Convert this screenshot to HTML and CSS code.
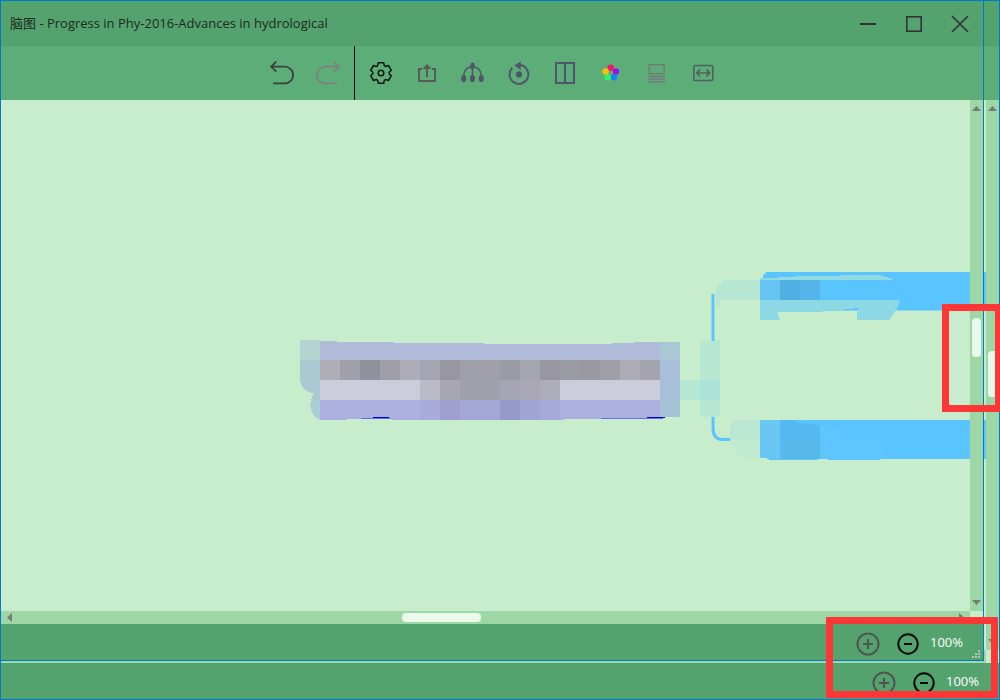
FILE: index.html
```html
<!DOCTYPE html>
<html lang="zh">
<head>
    <meta charset="UTF-8">
    <meta name="viewport" content="width=device-width, initial-scale=1.0">
    <title>脑图 - Progress in Phy-2016-Advances in hydrological</title>
    <link rel="stylesheet" href="styles.css">
</head>
<body>

    <!-- back window -->
    <div class="window back">
        <div class="titlebar"></div>
        <div class="toolbar"></div>
        <div class="content">
            <div class="canvas">
                <svg class="map">
                    <g transform="translate(-1 -100)" fill="#5ac4ff">
                        <rect x="764" y="272" width="1200" height="38"/>
                        <rect x="764" y="420" width="1200" height="39"/>
                    </g>
                </svg>
            </div>
            <div class="scroll vertical">
                <span class="arrow up"></span>
                <div class="track"><div class="thumb"></div></div>
                <span class="arrow down"></span>
            </div>
            <div class="scroll horizontal"></div>
        </div>
        <div class="statusbar">
            <button class="zoom-btn" aria-label="Zoom in">
                <svg width="24" height="24" fill="none" stroke="#505552" stroke-width="2"><circle cx="12" cy="12" r="10.5"/><path d="M12 7v10M7 12h10"/></svg>
            </button>
            <button class="zoom-btn" aria-label="Zoom out">
                <svg width="24" height="24" fill="none" stroke="#050a06" stroke-width="2"><circle cx="12" cy="12" r="9.7"/><path d="M8 12h8"/></svg>
            </button>
            <span class="percent">100%</span>
        </div>
    </div>

    <!-- front window -->
    <div class="window front">
        <div class="titlebar">
            <span class="title">脑图 - Progress in Phy-2016-Advances in hydrological</span>
            <button class="win-btn" aria-label="Minimize">
                <svg width="24" height="24" stroke="#333" stroke-width="2"><path d="M4 12h16"/></svg>
            </button>
            <button class="win-btn" aria-label="Maximize">
                <svg width="24" height="24" fill="none" stroke="#333" stroke-width="1.6"><rect x="4.8" y="4.8" width="14.4" height="14.4"/></svg>
            </button>
            <button class="win-btn" aria-label="Close">
                <svg width="24" height="24" stroke="#333" stroke-width="1.7"><path d="M4 4l16 16M20 4L4 20"/></svg>
            </button>
        </div>

        <div class="toolbar">
            <button class="tool" aria-label="Undo">
                <svg width="24" height="24" fill="none" stroke="#38423b" stroke-width="1.8"><path d="M6.3.6L1.1 5.6l5.2 5M1.1 5.6H14.8a8.3 8.3 0 0 1 0 16.7H3"/></svg>
            </button>
            <button class="tool" aria-label="Redo" disabled>
                <svg width="24" height="24" fill="none" stroke="#808080" stroke-width="1.8"><path d="M17.7.6l5.2 5-5.2 5M22.900 5.600H9.200a8.300 8.300 0 0 0 0 16.700h12"/></svg>
            </button>
            <span class="divider"></span>
            <button class="tool" aria-label="Settings">
                <svg width="24" height="24" fill="none" stroke="#0c1a10" stroke-width="1.500" stroke-linejoin="round">
                    <path d="M9.300 1.700h5.400l.6 3 1.400.8 2.800-1 2.800 4.800-2.100 2v1.400l2.100 2-2.800 4.800-2.800-1-1.400.8-.6 3H9.300l-.6-3-1.400-.8-2.800 1-2.800-4.800 2.100-2v-1.400l-2.100-2 2.800-4.800 2.800 1 1.400-.8z"/>
                    <circle cx="12" cy="12" r="2.800"/>
                </svg>
            </button>
            <button class="tool" aria-label="Export">
                <svg width="24" height="24" fill="none" stroke="#565b58" stroke-width="2"><path d="M7 8H4v12h16V8h-3M12 16V5"/><path d="M7.500 8L12 3l4.500 5z" fill="#565b58" stroke="none"/></svg>
            </button>
            <button class="tool" aria-label="Structure">
                <svg width="24" height="24" fill="#50556a">
                    <path d="M2.500 16C2.700 9.500 6 6 11.500 5.500 17 6 20.300 9.500 20.500 16M11.500 5v12" fill="none" stroke="#50556a" stroke-width="1.500"/>
                    <ellipse cx="11.500" cy="5" rx="2.200" ry="3.400"/>
                    <ellipse cx="2.700" cy="17.400" rx="2.500" ry="3.600"/>
                    <ellipse cx="11.500" cy="17.400" rx="2.500" ry="3.600"/>
                    <ellipse cx="20.300" cy="17.400" rx="2.500" ry="3.600"/>
                </svg>
            </button>
            <button class="tool" aria-label="Rotate">
                <svg width="24" height="24" fill="#50556a"><path d="M5.300 6.800A9.400 9.400 0 1 0 13 4.100" fill="none" stroke="#50556a" stroke-width="2"/><circle cx="12" cy="13.400" r="3.100"/><path d="M7.500 4.500L13.700.5v8.500z"/></svg>
            </button>
            <button class="tool" aria-label="Columns">
                <svg width="24" height="24" fill="none" stroke="#50556a" stroke-width="2"><rect x="3" y="2" width="18" height="20"/><path d="M12 2v20"/></svg>
            </button>
            <button class="tool" aria-label="Colors">
                <svg width="24" height="24">
                    <circle cx="11.700" cy="6.700" r="3.200" fill="#f8136c"/>
                    <circle cx="17" cy="10.500" r="3.200" fill="#9a10f0"/>
                    <circle cx="15" cy="16.300" r="3.200" fill="#1484fa"/>
                    <circle cx="8.700" cy="16.300" r="3.200" fill="#2cf664"/>
                    <circle cx="6.700" cy="10.500" r="3.200" fill="#fbbf05"/>
                </svg>
            </button>
            <button class="tool" aria-label="Outline" disabled>
                <svg width="24" height="24" fill="none" stroke="#747b76" stroke-width="1.500"><rect x="4.200" y="3.700" width="15" height="9"/><path d="M3.500 15.500h16.500M3.500 18h16.500M3.500 20.800h16.500"/></svg>
            </button>
            <button class="tool" aria-label="Fit width">
                <svg width="24" height="24" fill="none" stroke="#50605a" stroke-width="1.600"><rect x="2.800" y="4.500" width="19" height="15" rx="1.500"/><path d="M6 12h12.500M9 8.500L5.800 12 9 15.500M15.500 8.500l3.200 3.500-3.200 3.500"/></svg>
            </button>
        </div>

        <div class="content">
            <div class="canvas">
                <svg class="map" shape-rendering="crispEdges">
                    <g transform="translate(-1 -100)">
                        <!-- connector -->
                        <path d="M713 294V428Q713 439.500 723 439.500H731" fill="none" stroke="#5ac4ff" stroke-width="3" shape-rendering="auto"/>
                        <path d="M714 300Q715 286 724 280H760V300H720V308Z" fill="#b5e7d3"/>
                        <rect x="680" y="380" width="20" height="20" fill="#b5e7d3"/>
                        <path d="M700 341H716V340H720V416H715V417H700Z" fill="#b5e7d3"/>
                        <rect x="700" y="380" width="20" height="20" fill="#abe3d9"/>

                        <!-- root node -->
                        <rect x="300" y="340" width="20" height="20" fill="#b2d5d2"/>
                        <path d="M300 360H320V400H311L314 393Q306 393 302 386L300 381Z" fill="#a9c9d3"/>
                        <path d="M311 400H320V420Q308 414 311 400Z" fill="#aad0d3"/>
                        <path d="M320 341H337V342H394V343H484V344H612V343H634V342H660V360H320Z" fill="#b0bbda"/>
                        <rect x="660" y="342" width="20" height="18" fill="#aac8d4"/>
                        <rect x="660" y="360" width="20" height="40" fill="#a9bfd9"/>
                        <rect x="660" y="400" width="20" height="17" fill="#a6c2d6"/>

                        <rect x="320" y="360" width="20" height="20" fill="#aeadb8"/>
                        <rect x="340" y="360" width="20" height="20" fill="#a19fa9"/>
                        <rect x="360" y="360" width="20" height="20" fill="#8f929c"/>
                        <rect x="380" y="360" width="20" height="20" fill="#a09fa9"/>
                        <rect x="400" y="360" width="20" height="20" fill="#adacb7"/>
                        <rect x="420" y="360" width="20" height="20" fill="#a4a5b2"/>
                        <rect x="440" y="360" width="20" height="20" fill="#9896a1"/>
                        <rect x="460" y="360" width="20" height="20" fill="#9fa1aa"/>
                        <rect x="480" y="360" width="20" height="20" fill="#a19fa8"/>
                        <rect x="500" y="360" width="20" height="20" fill="#999ba7"/>
                        <rect x="520" y="360" width="20" height="20" fill="#a3a6af"/>
                        <rect x="540" y="360" width="20" height="20" fill="#9896a1"/>
                        <rect x="560" y="360" width="20" height="20" fill="#999ca4"/>
                        <rect x="580" y="360" width="20" height="20" fill="#9a98a3"/>
                        <rect x="600" y="360" width="20" height="20" fill="#a09fa9"/>
                        <rect x="620" y="360" width="20" height="20" fill="#adacb7"/>
                        <rect x="640" y="360" width="20" height="20" fill="#a3a4af"/>

                        <rect x="320" y="380" width="340" height="20" fill="#cccddb"/>
                        <rect x="420" y="380" width="20" height="20" fill="#b9bcc6"/>
                        <rect x="440" y="380" width="20" height="20" fill="#a7a6b1"/>
                        <rect x="460" y="380" width="40" height="20" fill="#a0a2ab"/>
                        <rect x="500" y="380" width="20" height="20" fill="#a5a6b3"/>
                        <rect x="520" y="380" width="20" height="20" fill="#aaa8b4"/>
                        <rect x="540" y="380" width="20" height="20" fill="#adaeba"/>

                        <path d="M320 400H660V419H564V420H392V419H347V420H320Z" fill="#adb0df"/>
                        <rect x="420" y="400" width="20" height="20" fill="#a9abda"/>
                        <rect x="440" y="400" width="20" height="20" fill="#9e9fcf"/>
                        <rect x="460" y="400" width="40" height="20" fill="#a4a6d5"/>
                        <rect x="500" y="400" width="20" height="20" fill="#979ac8"/>
                        <rect x="520" y="400" width="20" height="20" fill="#a1a5d3"/>
                        <rect x="540" y="400" width="20" height="20" fill="#a6a8d8"/>
                        <path d="M361 418h30v1h-30zM601 418h62v1h-62z" fill="#6470e4"/>
                        <path d="M373 417h16v1h-16zM647 417h18v1h-18z" fill="#0000d8"/>

                        <!-- upper topic -->
                        <path d="M763 280V276L766 272H2000V310H763Z" fill="#5ac4ff"/>
                        <rect x="895" y="310" width="1200" height="1" fill="#8cd9e4"/>
                        <path d="M760 278H778V277H795V276H841V275H858V276L860 275H879L893 279V280H760Z" fill="#91dbe0"/>
                        <rect x="760" y="280" width="20" height="20" fill="#65c4f2"/>
                        <rect x="780" y="280" width="20" height="20" fill="#50b0e4"/>
                        <rect x="800" y="280" width="20" height="20" fill="#54b4ea"/>
                        <path d="M760 300H900L897 309L889 320H857V311H823V312H777L780 320H760Z" fill="#8cd8e5"/>
                        <path d="M844 309h10v-1h5v1l-2 1h-13z" fill="#5ac4ff"/>

                        <!-- lower topic -->
                        <path d="M730 440V428Q730 420 738 420H760V440Z" fill="#bae8d3"/>
                        <path d="M730 440H760V458H748Q732 456 730 440Z" fill="#bfebd0"/>
                        <path d="M760 420H2000V459H880V460H828V459H818V460H770L766 458H760Z" fill="#5ac4ff"/>
                        <path d="M820 425L840 427V440H888L881 459H820Z" fill="#5ec6fc"/>
                        <rect x="760" y="420" width="20" height="38" fill="#6ac7f2"/>
                        <path d="M780 420H793L800 423L820 425V440H780Z" fill="#54b9f1"/>
                        <rect x="780" y="440" width="40" height="19" fill="#58b9ed"/>
                    </g>
                </svg>
            </div>
            <div class="scroll vertical">
                <span class="arrow up"></span>
                <div class="track"><div class="thumb"></div></div>
                <span class="arrow down"></span>
            </div>
            <div class="scroll horizontal">
                <span class="arrow left"></span>
                <div class="track"><div class="thumb"></div></div>
                <span class="arrow right"></span>
            </div>
        </div>

        <div class="statusbar">
            <button class="zoom-btn" aria-label="Zoom in">
                <svg width="24" height="24" fill="none" stroke="#505552" stroke-width="2"><circle cx="12" cy="12" r="10.500"/><path d="M12 7v10M7 12h10"/></svg>
            </button>
            <button class="zoom-btn" aria-label="Zoom out">
                <svg width="24" height="24" fill="none" stroke="#050a06" stroke-width="2"><circle cx="12" cy="12" r="9.700"/><path d="M8 12h8"/></svg>
            </button>
            <span class="percent">100%</span>
            <svg class="grip" width="8" height="8" fill="#b4c4b8"><path d="M6 0h2v2H6zM3 3h2v2H3zM6 3h2v2H6zM0 6h2v2H0zM3 6h2v2H3zM6 6h2v2H6z"/></svg>
        </div>
    </div>

    <!-- highlights -->
    <div class="mark mark-scroll"></div>
    <div class="mark mark-zoom"></div>

</body>
</html>
```
FILE: styles.css
```css
* {
    box-sizing: border-box;
}
body {
    position: relative;
    height: 100vh;
    margin: 0;
    overflow: hidden;
    font-family: "Open Sans", "Noto Sans CJK SC", sans-serif;
    font-size: 13px;
    color: #1c2b20;
}
button {
    display: flex;
    justify-content: center;
    align-items: center;
    padding: 0;
    border: none;
    background: none;
    cursor: pointer;
}
.window {
    display: flex;
    flex-direction: column;
    border: 1px solid #007acc;
    background-color: #54a36e;
}
.back {
    height: 100%;
}
.front {
    position: absolute;
    top: 0;
    left: 0;
    right: 16px;
    bottom: 39px;
}
.titlebar {
    display: flex;
    align-items: stretch;
    flex: none;
    height: 45px;
    padding-left: 9px;
}
.title {
    flex: 1;
    line-height: 45px;
    white-space: nowrap;
}
.win-btn {
    width: 46px;
}
.toolbar {
    display: flex;
    justify-content: center;
    flex: none;
    height: 54px;
    background-color: #5dad78;
}
.tool {
    width: 46px;
}
.divider {
    width: 1px;
    margin: 0 3px;
    background-color: #000;
}

/* canvas and scrollbars */
.content {
    display: grid;
    grid-template-columns: 1fr 13px;
    grid-template-rows: 1fr 13px;
    flex: 1;
    min-height: 0;
    background-color: #c8edcc;
}
.canvas {
    min-width: 0;
    min-height: 0;
    overflow: hidden;
}
.map {
    display: block;
    width: 100%;
    height: 100%;
}
.scroll {
    display: flex;
    background-color: #9dd7a5;
}
.vertical {
    flex-direction: column;
}
.track {
    flex: 1;
}
.thumb {
    border-radius: 4px;
    background-color: #e9f9eb;
}
.vertical .thumb {
    width: 9px;
    height: 39px;
    margin: 201px 2px 0;
}
.back .vertical .thumb {
    height: 46px;
    margin-top: 234px;
}
.horizontal .thumb {
    width: 79px;
    height: 9px;
    margin: 2px 0 0 384px;
}
.arrow {
    display: flex;
    justify-content: center;
    align-items: center;
    width: 17px;
    height: 13px;
}
.vertical .arrow {
    width: 13px;
    height: 17px;
}
.arrow::before {
    content: "";
    width: 9px;
    height: 5px;
    background-color: #777b78;
    clip-path: polygon(50% 0, 100% 100%, 0 100%);
}
.down::before {
    clip-path: polygon(0 0, 100% 0, 50% 100%);
}
.left::before, .right::before {
    width: 5px;
    height: 9px;
    clip-path: polygon(0 50%, 100% 0, 100% 100%);
}
.right::before {
    clip-path: polygon(0 0, 100% 50%, 0 100%);
}

.statusbar {
    position: relative;
    display: flex;
    justify-content: flex-end;
    align-items: center;
    flex: none;
    height: 36px;
    padding: 4px 20px 0 0;
    color: #fff;
}
.zoom-btn {
    width: 40px;
}
.percent {
    width: 35px;
    padding-bottom: 4px;
    text-align: right;
}
.grip {
    position: absolute;
    right: 3px;
    bottom: 2px;
}

.mark {
    position: absolute;
    border: 7px solid #fd3636;
    pointer-events: none;
}
.mark-scroll {
    top: 304px;
    right: -2px;
    width: 60px;
    height: 108px;
}
.mark-zoom {
    right: 2px;
    bottom: 2px;
    width: 172px;
    height: 81px;
}
```
